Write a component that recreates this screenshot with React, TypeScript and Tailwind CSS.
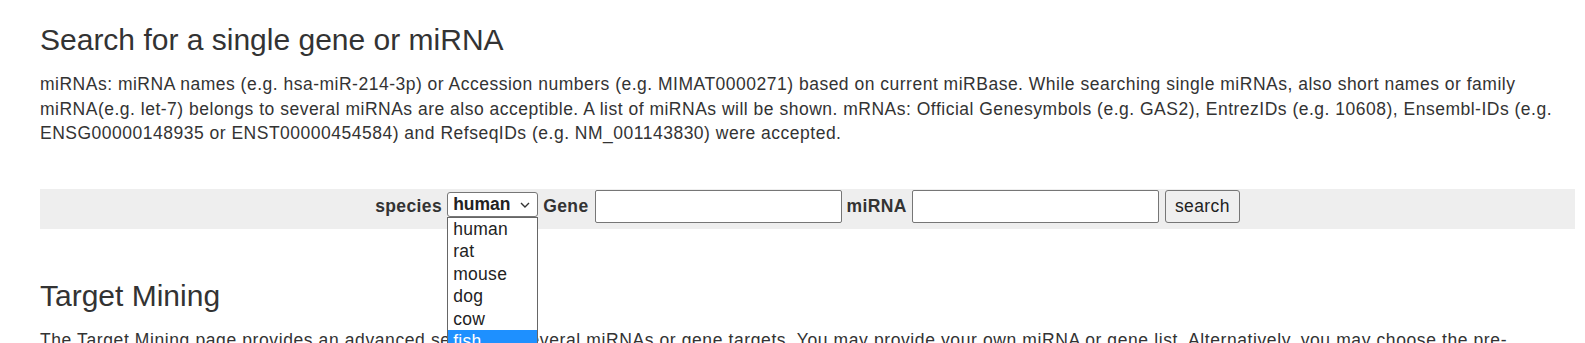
import React from 'react';

const species = ['human', 'rat', 'mouse', 'dog', 'cow', 'fish', 'chicken'];

export default function App() {
  return (
    <div className="min-h-screen bg-white font-['Liberation_Sans',Arial,sans-serif] text-[#333]">
      <div className="ml-[40px] w-[1535px]">
        {/* Single search */}
        <h2 className="pt-[23px] text-[30px] leading-[33px] font-normal">Search for a single gene or miRNA</h2>
        <p className="mt-[16px] text-[17.5px] leading-[24.5px] tracking-[0.5px]">
          miRNAs: miRNA names (e.g. hsa-miR-214-3p) or Accession numbers (e.g. MIMAT0000271) based on current miRBase. While searching single miRNAs, also short names or family miRNA(e.g. let-7) belongs to several miRNAs are also acceptible. A list of miRNAs will be shown. mRNAs: Official Genesymbols (e.g. GAS2), EntrezIDs (e.g. 10608), Ensembl-IDs (e.g. ENSG00000148935 or ENST00000454584) and RefseqIDs (e.g. NM_001143830) were accepted.
        </p>

        <form className="mt-[43px] h-[40px] bg-[#eeeeee] flex justify-center items-start gap-[5px] text-[17.5px]">
          <label className="h-[34px] leading-[34px] font-bold tracking-[0.4px]">species</label>
          <div className="relative mt-[3px]">
            <div className="w-[91px] h-[25px] border border-[#767676] rounded-[3px] bg-white flex items-center justify-between pl-[5px] pr-[7px]">
              <span className="font-bold text-[#222] leading-[23px]">human</span>
              <svg width="10" height="6" viewBox="0 0 10 6" className="mt-[1px]">
                <polyline points="1,1 5,5 9,1" fill="none" stroke="#333" strokeWidth="1.4" />
              </svg>
            </div>
            <ul className="absolute left-0 top-[25px] z-10 w-[91px] border border-[#666] bg-white">
              {species.map((s) => (
                <li
                  key={s}
                  className={
                    s === 'fish'
                      ? 'h-[22.6px] leading-[22.6px] pl-[5px] tracking-[0.3px] bg-[#1e90ff] text-white'
                      : 'h-[22.6px] leading-[22.6px] pl-[5px] tracking-[0.3px] text-[#222]'
                  }
                >
                  {s}
                </li>
              ))}
            </ul>
          </div>
          <label className="h-[34px] leading-[34px] font-bold tracking-[0.4px]">Gene</label>
          <input
            type="text"
            className="ml-[1px] mt-[1px] w-[247px] h-[33px] border border-[#767676] rounded-[2px] bg-white px-[4px] outline-none"
          />
          <label className="h-[34px] leading-[34px] font-bold tracking-[0.4px]">miRNA</label>
          <input
            type="text"
            className="mt-[1px] w-[247px] h-[33px] border border-[#767676] rounded-[2px] bg-white px-[4px] outline-none"
          />
          <button
            type="button"
            className="ml-[1px] mt-[1px] w-[75px] h-[33px] border border-[#767676] rounded-[3px] bg-[#efefef] text-[#222] tracking-[0.4px]"
          >
            search
          </button>
        </form>

        {/* Target mining */}
        <h2 className="mt-[50px] text-[30px] leading-[33px] font-normal">Target Mining</h2>
        <p className="mt-[16px] text-[17.5px] leading-[24.5px] tracking-[0.6px]">
          The Target Mining page provides an advanced search for several miRNAs or gene targets. You may provide your own miRNA or gene list. Alternatively, you may choose the pre-calculated lists of miRNAs or genes from the database and filter the results by several criteria.
        </p>
      </div>
    </div>
  );
}
